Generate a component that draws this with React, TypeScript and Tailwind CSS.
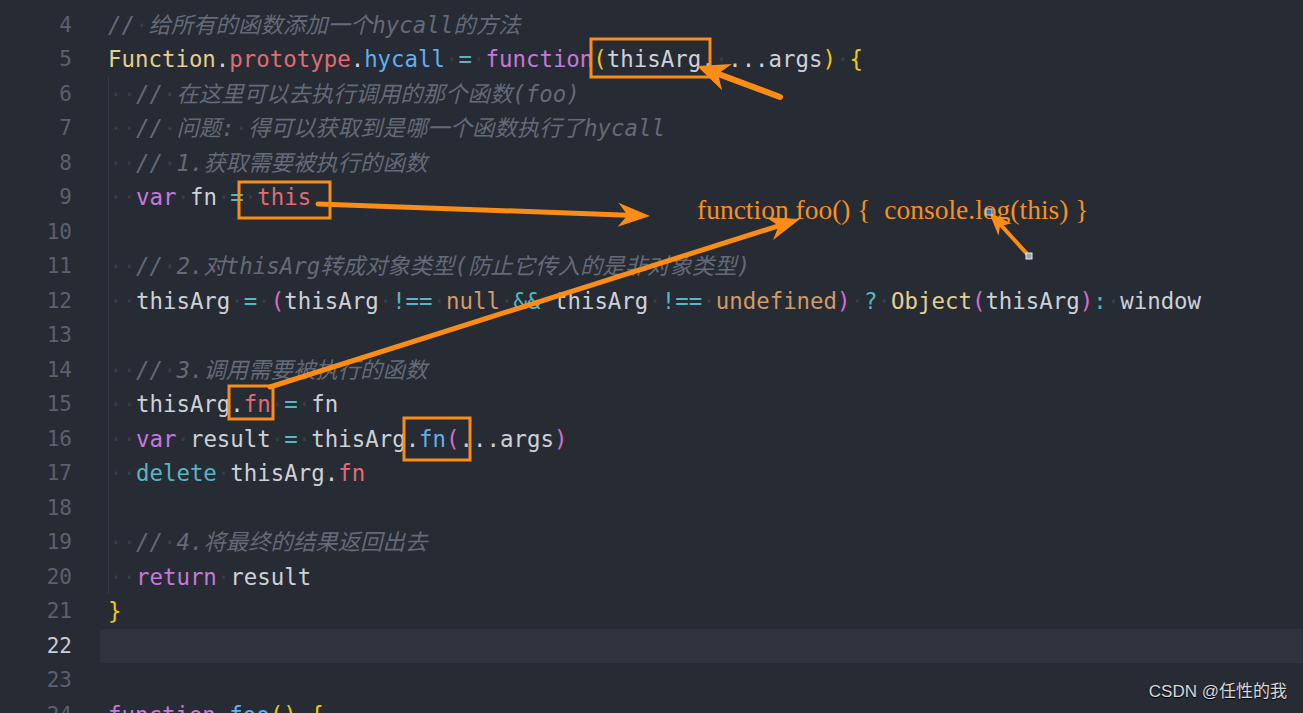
import type { ReactNode } from 'react';

type Tok = [string, string?];

const C = {
  kw: 'text-[#c678dd]',
  cls: 'text-[#e3cf8e]',
  prop: 'text-[#e06c75]',
  fn: 'text-[#61afef]',
  op: 'text-[#56b6c2]',
  tx: 'text-[#cdd1d8]',
  num: 'text-[#d19a66]',
  br1: 'text-[#f2c80f]',
  br2: 'text-[#d16fd0]',
  cm: 'text-[#646a77] italic',
};

const lines: { n: number; guide?: boolean; toks: Tok[] }[] = [
  { n: 4, toks: [['// 给所有的函数添加一个hycall的方法', C.cm]] },
  {
    n: 5,
    toks: [
      ['Function', C.cls], ['.', C.tx], ['prototype', C.prop], ['.', C.tx], ['hycall', C.fn],
      [' '], ['=', C.op], [' '], ['function', C.kw], ['(', C.br1], ['thisArg', C.tx], [',', C.tx],
      [' '], ['...args', C.tx], [')', C.br1], [' '], ['{', C.br1],
    ],
  },
  { n: 6, guide: true, toks: [['// 在这里可以去执行调用的那个函数(foo)', C.cm]] },
  { n: 7, guide: true, toks: [['// 问题: 得可以获取到是哪一个函数执行了hycall', C.cm]] },
  { n: 8, guide: true, toks: [['// 1.获取需要被执行的函数', C.cm]] },
  { n: 9, guide: true, toks: [['var', C.kw], [' '], ['fn', C.tx], [' '], ['=', C.op], [' '], ['this', C.prop]] },
  { n: 10, guide: true, toks: [] },
  { n: 11, guide: true, toks: [['// 2.对thisArg转成对象类型(防止它传入的是非对象类型)', C.cm]] },
  {
    n: 12,
    guide: true,
    toks: [
      ['thisArg', C.tx], [' '], ['=', C.op], [' '], ['(', C.br2], ['thisArg', C.tx], [' '], ['!==', C.op], [' '],
      ['null', C.num], [' '], ['&&', C.op], [' '], ['thisArg', C.tx], [' '], ['!==', C.op], [' '],
      ['undefined', C.num], [')', C.br2], [' '], ['?', C.op], [' '], ['Object', C.cls], ['(', C.br2],
      ['thisArg', C.tx], [')', C.br2], [':', C.op], [' '], ['window', C.tx],
    ],
  },
  { n: 13, guide: true, toks: [] },
  { n: 14, guide: true, toks: [['// 3.调用需要被执行的函数', C.cm]] },
  { n: 15, guide: true, toks: [['thisArg', C.tx], ['.', C.tx], ['fn', C.prop], [' '], ['=', C.op], [' '], ['fn', C.tx]] },
  {
    n: 16,
    guide: true,
    toks: [
      ['var', C.kw], [' '], ['result', C.tx], [' '], ['=', C.op], [' '], ['thisArg', C.tx], ['.', C.tx],
      ['fn', C.fn], ['(', C.br2], ['...args', C.tx], [')', C.br2],
    ],
  },
  { n: 17, guide: true, toks: [['delete', C.op], [' '], ['thisArg', C.tx], ['.', C.tx], ['fn', C.prop]] },
  { n: 18, guide: true, toks: [] },
  { n: 19, guide: true, toks: [['// 4.将最终的结果返回出去', C.cm]] },
  { n: 20, guide: true, toks: [['return', C.kw], [' '], ['result', C.tx]] },
  { n: 21, toks: [['}', C.br1]] },
  { n: 22, toks: [] },
  { n: 23, toks: [] },
  {
    n: 24,
    toks: [['function', C.kw], [' '], ['foo', C.fn], ['()', C.br1], [' '], ['{', C.br1]],
  },
];

// spaces shown as faint dots, like "render whitespace"
function renderTok([text, cls]: Tok, i: number): ReactNode {
  const parts = text.split(/( )/);
  return (
    <span key={i} className={cls ?? ''}>
      {parts.map((p, j) =>
        p === ' ' ? (
          <span key={j} className="text-[#383d48] not-italic">·</span>
        ) : (
          <span key={j}>{p}</span>
        ),
      )}
    </span>
  );
}

function arrow(x1: number, y1: number, x2: number, y2: number, len: number, half: number) {
  const dx = x2 - x1;
  const dy = y2 - y1;
  const d = Math.hypot(dx, dy);
  const ux = dx / d;
  const uy = dy / d;
  const bx = x2 - ux * len;
  const by = y2 - uy * len;
  const nx = -uy * half;
  const ny = ux * half;
  const kx = x2 - ux * len * 0.7;
  const ky = y2 - uy * len * 0.7;
  return {
    line: `M${x1} ${y1} L${kx} ${ky}`,
    head: `M${x2} ${y2} L${bx + nx} ${by + ny} L${kx} ${ky} L${bx - nx} ${by - ny} Z`,
  };
}

const ORANGE = '#fb8c16';

function Annotations() {
  const a1 = arrow(780, 97, 697, 66, 32, 14);
  const a2 = arrow(318, 204, 650, 216, 32, 12);
  const a3 = arrow(270, 387, 800, 219, 32, 12);
  const a4 = arrow(1029, 256, 989, 212, 24, 9);
  return (
    <svg className="absolute inset-0 pointer-events-none" width="1303" height="713" viewBox="0 0 1303 713">
      <rect x="591" y="39" width="119" height="38" fill="none" stroke={ORANGE} strokeWidth="3" />
      <rect x="239" y="182" width="91" height="36" fill="none" stroke={ORANGE} strokeWidth="3" />
      <rect x="229" y="386" width="44" height="33" fill="none" stroke={ORANGE} strokeWidth="3" />
      <rect x="404" y="418" width="66" height="42" fill="none" stroke={ORANGE} strokeWidth="3" />
      {[a1, a2, a3].map((a, i) => (
        <g key={i}>
          <path d={a.line} stroke={ORANGE} strokeWidth={i === 0 ? 6 : 5} strokeLinecap="round" fill="none" />
          <path d={a.head} fill={ORANGE} />
        </g>
      ))}
      <path d={a4.line} stroke={ORANGE} strokeWidth="4" strokeLinecap="round" fill="none" />
      <path d={a4.head} fill={ORANGE} />
      <rect x="1026" y="253" width="6" height="6" fill="#9aa6b8" stroke="#e8e8e8" strokeWidth="1" />
      <rect x="986" y="209" width="6" height="6" fill="#4d6aa0" stroke="#d0d6e0" strokeWidth="1" />
    </svg>
  );
}

export default function App() {
  return (
    <div className="relative w-[1303px] h-[713px] overflow-hidden bg-[#272b34]">
      <div
        className="pt-[7.75px] text-[22.4px] leading-[34.5px]"
        style={{ fontFamily: '"DejaVu Sans Mono", "Noto Sans CJK SC", monospace' }}
      >
        {lines.map((l) => (
          <div key={l.n} className="flex h-[34.5px] items-center">
            <div
              className={`w-[72px] shrink-0 text-right text-[21px] ${l.n === 22 ? 'text-[#c9ccd2]' : 'text-[#5b616d]'}`}
            >
              {l.n}
            </div>
            <div
              className={`ml-[28px] pl-[8px] flex-1 h-full flex items-center whitespace-pre ${
                l.n === 22 ? 'bg-[#2e333d]' : ''
              }`}
            >
              {l.guide && (
                <span className="inline-flex h-full items-center border-l border-[#363b45] text-[#383d48]">
                  {l.toks.length ? '··' : '  '}
                </span>
              )}
              {l.toks.map(renderTok)}
            </div>
          </div>
        ))}
      </div>

      <div
        className="absolute left-[697px] top-[193px] text-[27.5px] leading-[34px] text-[#f7901e] whitespace-pre"
        style={{ fontFamily: '"Liberation Serif", serif' }}
      >
        {'function foo() {  console.log(this) }'}
      </div>

      <Annotations />

      <div
        className="absolute right-[16px] bottom-[9px] text-[17px] text-[#d8d8d8] [text-shadow:0_1px_1px_#000]"
        style={{ fontFamily: '"Liberation Sans", "Noto Sans CJK SC", sans-serif' }}
      >
        CSDN @任性的我
      </div>
    </div>
  );
}
